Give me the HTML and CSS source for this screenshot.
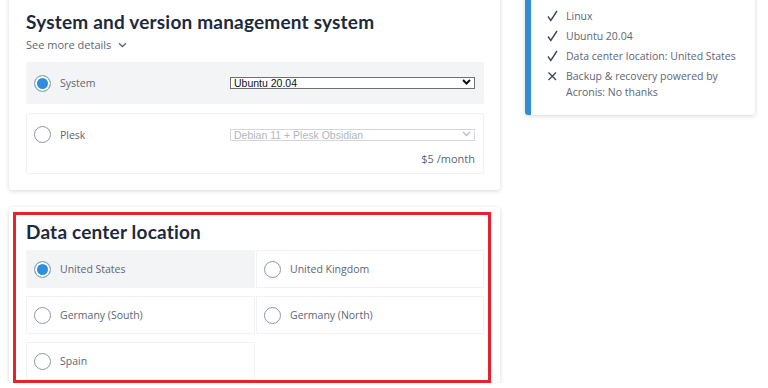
FILE: index.html
```html
<!DOCTYPE html>
<html>
  <head>
    <title>Configure server</title>
    <link rel="stylesheet" href="styles.css">
  </head>
  <body>
    <div class="page">
      <div class="main">
        <section class="card card-system">
          <h2>System and version management system</h2>
          <a class="details" href="#">See more details
            <svg width="9" height="6" viewBox="0 0 9 6"><path d="M1 1.2 L4.5 4.5 L8 1.2" fill="none" stroke="#5b6572" stroke-width="1.3"/></svg>
          </a>

          <div class="option option-selected">
            <label class="choice"><span class="radio checked"></span>System</label>
            <div class="select-wrap">
              <select class="os-select">
                <option>Ubuntu 20.04</option>
              </select>
              <svg class="arrow" width="9" height="6" viewBox="0 0 9 6"><path d="M1 1 L4.5 4.5 L8 1" fill="none" stroke="#111" stroke-width="2"/></svg>
            </div>
          </div>

          <div class="option option-plesk">
            <div class="option-head">
              <label class="choice"><span class="radio"></span>Plesk</label>
              <div class="select-wrap disabled">
                <select class="os-select" disabled>
                  <option>Debian 11 + Plesk Obsidian</option>
                </select>
                <svg class="arrow" width="9" height="6" viewBox="0 0 9 6"><path d="M1 1 L4.5 4.5 L8 1" fill="none" stroke="#b5b9bd" stroke-width="1.3"/></svg>
              </div>
            </div>
            <div class="price">$5 /month</div>
          </div>
        </section>

        <section class="card card-location">
          <div class="highlight">
            <h2>Data center location</h2>
            <div class="locations">
              <label class="location selected"><span class="radio checked"></span>United States</label>
              <label class="location"><span class="radio"></span>United Kingdom</label>
              <label class="location"><span class="radio"></span>Germany (South)</label>
              <label class="location"><span class="radio"></span>Germany (North)</label>
              <label class="location"><span class="radio"></span>Spain</label>
            </div>
          </div>
        </section>
      </div>

      <aside class="summary">
        <ul>
          <li>
            <svg class="mark" width="11" height="12" viewBox="0 0 11 12"><path d="M1 6.5 L3.8 10.5 L10 1" fill="none" stroke="#3e4957" stroke-width="1.4"/></svg>
            <span>Linux</span>
          </li>
          <li>
            <svg class="mark" width="11" height="12" viewBox="0 0 11 12"><path d="M1 6.5 L3.8 10.5 L10 1" fill="none" stroke="#3e4957" stroke-width="1.4"/></svg>
            <span>Ubuntu 20.04</span>
          </li>
          <li>
            <svg class="mark" width="11" height="12" viewBox="0 0 11 12"><path d="M1 6.5 L3.8 10.5 L10 1" fill="none" stroke="#3e4957" stroke-width="1.4"/></svg>
            <span>Data center location: United States</span>
          </li>
          <li>
            <svg class="mark" width="11" height="12" viewBox="0 0 11 12"><path d="M1.5 2.5 L9 10 M9 2.5 L1.5 10" fill="none" stroke="#3e4957" stroke-width="1.4"/></svg>
            <span>Backup &amp; recovery powered by Acronis: No thanks</span>
          </li>
        </ul>
      </aside>
    </div>
  </body>
</html>
```

FILE: styles.css
```css
body {
  margin: 0;
  background: #fff;
  font-family: "Open Sans", Arial, sans-serif;
  color: #5d6673;
  font-size: 10.5px;
}
.page {
  display: flex;
  align-items: flex-start;
  gap: 25px;
  padding-left: 9px;
}
.main {
  width: 491px;
}
.card {
  background: #fff;
  border-radius: 3px;
  box-shadow: 0 1px 4px rgba(0, 0, 0, 0.16);
}
h2 {
  margin: 0;
  font-family: Lato, "Open Sans", sans-serif;
  font-size: 19px;
  line-height: 24px;
  font-weight: 700;
  color: #1c2a3d;
  letter-spacing: 0.2px;
}
.card-system {
  margin-top: -10px;
  padding: 20px 16px 16px 17px;
}
.details {
  display: flex;
  align-items: center;
  gap: 7px;
  margin-top: 3px;
  font-size: 11px;
  line-height: 16px;
  color: #5d6673;
  text-decoration: none;
}
.option {
  border: 1px solid #f0f1f2;
  border-radius: 2px;
}
.option-selected {
  margin-top: 9px;
  height: 40px;
  padding: 0 8px 0 7px;
  display: flex;
  align-items: center;
  justify-content: space-between;
  background: #f3f4f5;
  border-color: #f3f4f5;
}
.option-plesk {
  margin-top: 9px;
  padding: 12px 8px 6px 7px;
}
.option-head {
  display: flex;
  align-items: center;
  justify-content: space-between;
}
.choice {
  display: flex;
  align-items: center;
  gap: 9px;
}
.radio {
  box-sizing: border-box;
  width: 17px;
  height: 17px;
  border-radius: 50%;
  border: 1px solid #8e97a2;
  background: #fff;
  flex-shrink: 0;
}
.radio.checked {
  border-color: #9aa8b8;
  background: #2e8edb;
  box-shadow: inset 0 0 0 2px #fff;
}
.select-wrap {
  position: relative;
  width: 245px;
}
.os-select {
  appearance: none;
  box-sizing: border-box;
  width: 100%;
  height: 12px;
  margin: 0;
  padding: 0 0 0 3px;
  border: 1px solid #6f6f6f;
  border-radius: 0;
  background: #fff;
  font-family: "Liberation Sans", Arial, sans-serif;
  font-size: 10.5px;
  line-height: 10px;
  color: #111;
}
.select-wrap.disabled .os-select {
  border-color: #d4d6d8;
  color: #b2b6bb;
  background: #fff;
  opacity: 1;
}
.arrow {
  position: absolute;
  right: 4px;
  top: 3px;
  pointer-events: none;
}
.price {
  margin-top: 8px;
  text-align: right;
  font-size: 11px;
  line-height: 16px;
}
.card-location {
  margin-top: 17px;
  padding: 5px 9px 0 4px;
}
.highlight {
  border: 3px solid #e8212b;
  padding: 5px 4px 0 10px;
}
.locations {
  margin-top: 6px;
  display: grid;
  grid-template-columns: 229px 228px;
  column-gap: 1px;
  row-gap: 8px;
}
.location {
  box-sizing: border-box;
  height: 38px;
  display: flex;
  align-items: center;
  gap: 9px;
  padding-left: 7px;
  border: 1px solid #f1f2f3;
}
.location.selected {
  background: #f3f4f5;
  border-color: #f3f4f5;
}
.summary {
  width: 224px;
  margin-top: -10px;
  padding: 18px 0 15px 0;
  background: #fff;
  border-left: 6px solid #2e8fd6;
  border-radius: 3px;
  box-shadow: 0 1px 4px rgba(0, 0, 0, 0.16);
}
.summary ul {
  list-style: none;
  margin: 0;
  padding: 0 10px 0 16px;
}
.summary li {
  display: flex;
  align-items: flex-start;
  gap: 8px;
  line-height: 16px;
  margin-bottom: 4px;
}
.summary li:last-child {
  margin-bottom: 0;
}
.mark {
  flex-shrink: 0;
  margin-top: 2px;
}
```
